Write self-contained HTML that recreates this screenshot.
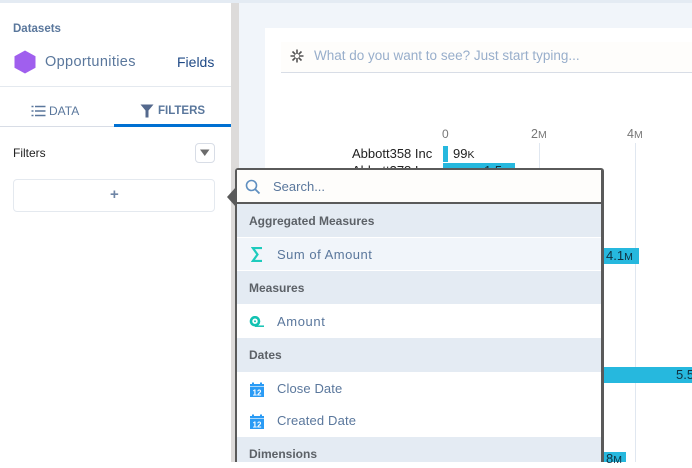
<!DOCTYPE html>
<html><head><meta charset="utf-8">
<style>
html,body{margin:0;padding:0}
body{width:692px;height:462px;overflow:hidden;position:relative;background:#fff;font-family:"Liberation Sans",sans-serif}
.a{position:absolute}
.t{position:absolute;white-space:nowrap;line-height:16px}
.h{position:absolute;left:237px;width:364px;background:#e4ebf3}
.ht{position:absolute;left:249px;white-space:nowrap;font-size:12px;font-weight:bold;color:#5c6167;line-height:16px}
.it{position:absolute;left:277px;white-space:nowrap;font-size:13px;color:#5a779c;line-height:16px}
</style></head>
<body>
<div class="a" style="left:0;top:0;width:692px;height:3px;background:#e4ebf3"></div>
<div class="a" style="left:239px;top:3px;width:453px;height:459px;background:#f1f5fa"></div>
<div class="a" style="left:231px;top:3px;width:8px;height:459px;background:#dddbda"></div>
<div class="a" style="left:265px;top:28px;width:427px;height:434px;background:#fff"></div>
<div class="a" style="left:281px;top:42px;width:411px;height:30px;background:#fefdfb"></div>
<div class="a" style="left:281px;top:72px;width:411px;height:1px;background:#d8dde6"></div>
<svg class="a" style="left:289px;top:48px" width="16" height="16" viewBox="0 0 16 16"><g stroke="#555" stroke-width="1.6"><path d="M8 1.5V6M8 10V14.5M1.5 8H6M10 8H14.5M3.5 3.5L6.5 6.5M9.5 9.5L12.5 12.5M12.5 3.5L9.5 6.5M6.5 9.5L3.5 12.5"/></g></svg>
<div class="t" style="left:314px;top:48px;font-size:13.5px;color:#98aecb">What do you want to see? Just start typing...</div>

<!-- sidebar -->
<div class="t" style="left:13px;top:21px;font-size:11.5px;font-weight:bold;color:#5a779c">Datasets</div>
<svg class="a" style="left:14px;top:50px" width="22" height="24" viewBox="0 0 22 24"><path d="M11 0.5L21.5 6.2V17.8L11 23.5L0.5 17.8V6.2Z" fill="#a05fee"/></svg>
<div class="t" style="left:45px;top:54px;font-size:14.5px;letter-spacing:.35px;color:#5a779c">Opportunities</div>
<div class="t" style="left:177px;top:54px;font-size:14px;color:#1f4a86">Fields</div>
<div class="a" style="left:0;top:86px;width:231px;height:1px;background:#e4e9ef"></div>
<svg class="a" style="left:31px;top:105px" width="15" height="12" viewBox="0 0 15 12"><path d="M0.5 1.5H2.5M4 1.5H14.5M0.5 6H2.5M4 6H14.5M0.5 10.5H2.5M4 10.5H14.5" stroke="#5a779c" stroke-width="1.5" fill="none"/></svg>
<div class="t" style="left:49px;top:103px;font-size:12px;color:#5a779c">DATA</div>
<svg class="a" style="left:140px;top:104px" width="14" height="14" viewBox="0 0 14 14"><path d="M0.5 0.5H13.5L8.5 6.5V13.5H5.5V6.5Z" fill="#54698d"/></svg>
<div class="t" style="left:158px;top:103px;font-size:11.5px;font-weight:bold;color:#5a779c">FILTERS</div>
<div class="a" style="left:0;top:126px;width:114px;height:1px;background:#d8dde6"></div>
<div class="a" style="left:114px;top:124px;width:117px;height:3px;background:#0070d2"></div>
<div class="t" style="left:13px;top:145px;font-size:12px;color:#222">Filters</div>
<div class="a" style="left:195px;top:143px;width:18px;height:18px;border:1px solid #d8dde6;border-radius:4px;background:#fff"></div>
<svg class="a" style="left:200px;top:149px" width="10" height="8" viewBox="0 0 10 8"><path d="M0 0.5H9.5L4.75 7Z" fill="#6b6b6b"/></svg>
<div class="a" style="left:13px;top:179px;width:200px;height:31px;border:1px solid #e4e9ef;border-radius:4px;background:#fff"></div>
<div class="t" style="left:110px;top:187px;font-size:15px;font-weight:bold;color:#6f86a6">+</div>

<!-- chart -->
<div class="t" style="left:442px;top:126px;font-size:12px;color:#777">0</div>
<div class="t" style="left:531px;top:126px;font-size:12.5px;color:#777">2<span style="font-size:10.5px">M</span></div>
<div class="t" style="left:627px;top:126px;font-size:12.5px;color:#777">4<span style="font-size:10.5px">M</span></div>
<div class="a" style="left:539px;top:143px;width:1px;height:319px;background:#e0e7f0"></div>
<div class="a" style="left:635px;top:143px;width:1px;height:319px;background:#e0e7f0"></div>
<div class="a" style="left:443px;top:146px;width:5px;height:16px;background:#26b8de"></div>
<div class="a" style="left:443px;top:163px;width:72px;height:8px;background:#26b8de"></div>
<div class="t" style="left:352px;top:146px;font-size:13px;color:#222">Abbott358 Inc</div>
<div class="t" style="left:352px;top:163px;font-size:13px;color:#222">Abbott378 Inc</div>
<div class="t" style="left:484px;top:163px;font-size:13px;color:#10303f">1.5</div>
<div class="t" style="left:453px;top:146px;font-size:13px;color:#222">99<span style="font-size:10.5px">K</span></div>
<div class="a" style="left:603px;top:248px;width:36px;height:16px;background:#26b8de"></div>
<div class="t" style="left:606px;top:248px;font-size:13px;color:#10303f">4.1<span style="font-size:10.5px">M</span></div>
<div class="a" style="left:603px;top:367px;width:89px;height:16px;background:#26b8de"></div>
<div class="t" style="left:676px;top:367px;font-size:13px;color:#10303f">5.5</div>
<div class="a" style="left:603px;top:452px;width:23px;height:10px;background:#26b8de"></div>
<div class="t" style="left:606px;top:451px;font-size:13px;color:#10303f">8<span style="font-size:10.5px">M</span></div>

<!-- popup -->
<svg class="a" style="left:226px;top:187px" width="10" height="20" viewBox="0 0 10 20"><path d="M10 0V20L1 10Z" fill="#5a5a5a"/></svg>
<div class="a" style="left:235px;top:168px;width:369px;height:294px;background:#5a5a5a;border-radius:3px 3px 0 0"></div>
<div class="a" style="left:237px;top:170px;width:364px;height:32px;background:#fefdfb"></div>
<div class="a" style="left:237px;top:204px;width:364px;height:258px;background:#fff"></div>
<svg class="a" style="left:245px;top:179px" width="16" height="16" viewBox="0 0 16 16"><circle cx="6.5" cy="6.5" r="5" fill="none" stroke="#5f8fc0" stroke-width="1.6"/><path d="M10.2 10.2L14.5 14.5" stroke="#5f8fc0" stroke-width="1.8"/></svg>
<div class="t" style="left:273px;top:179px;font-size:13px;color:#5a779c">Search...</div>

<div class="h" style="top:204px;height:33px"></div>
<div class="ht" style="top:213px">Aggregated Measures</div>
<div class="a" style="left:237px;top:238px;width:364px;height:32px;background:#f1f5fa"></div>
<svg class="a" style="left:251px;top:247px" width="12" height="15" viewBox="0 0 12 15"><path d="M11 1H1.8L6.5 7.5L1.8 14H11" fill="none" stroke="#1ecbbd" stroke-width="2.2"/></svg>
<div class="it" style="top:247px;letter-spacing:.5px">Sum of Amount</div>

<div class="h" style="top:271px;height:33px"></div>
<div class="ht" style="top:280px">Measures</div>
<svg class="a" style="left:249px;top:316px" width="16" height="12" viewBox="0 0 16 12"><circle cx="6" cy="5.2" r="4" fill="none" stroke="#12c2b2" stroke-width="2.6"/><circle cx="6" cy="5.2" r="1" fill="#12c2b2"/><path d="M6 10.2H15" stroke="#12c2b2" stroke-width="1.5"/></svg>
<div class="it" style="top:314px;letter-spacing:.6px">Amount</div>

<div class="h" style="top:338px;height:34px"></div>
<div class="ht" style="top:347px">Dates</div>
<svg class="a" style="left:250px;top:382px" width="14" height="15" viewBox="0 0 14 15"><path d="M0 2H14V15H0Z" fill="#2a9bf5"/><path d="M3 0.5V2M11 0.5V2" stroke="#2a9bf5" stroke-width="2"/><path d="M0 4.5H14" stroke="#cfe8fc" stroke-width=".8"/><text x="7" y="13.3" text-anchor="middle" font-family="Liberation Sans" font-size="8" font-weight="bold" fill="#fff">12</text></svg>
<div class="it" style="top:381px;letter-spacing:.1px">Close Date</div>
<svg class="a" style="left:250px;top:414px" width="14" height="15" viewBox="0 0 14 15"><path d="M0 2H14V15H0Z" fill="#2a9bf5"/><path d="M3 0.5V2M11 0.5V2" stroke="#2a9bf5" stroke-width="2"/><path d="M0 4.5H14" stroke="#cfe8fc" stroke-width=".8"/><text x="7" y="13.3" text-anchor="middle" font-family="Liberation Sans" font-size="8" font-weight="bold" fill="#fff">12</text></svg>
<div class="it" style="top:413px;letter-spacing:.15px">Created Date</div>

<div class="h" style="top:437px;height:25px"></div>
<div class="ht" style="top:446px">Dimensions</div>
</body></html>
